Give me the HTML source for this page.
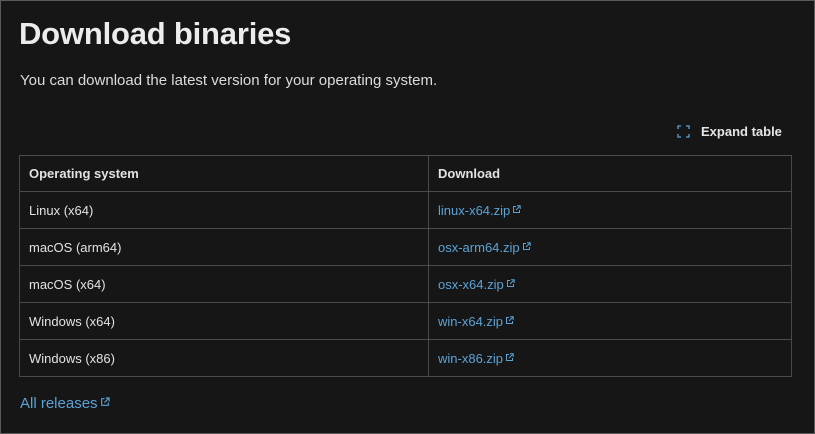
<!DOCTYPE html>
<html><head><style>
html,body{margin:0;padding:0}
body{width:815px;height:434px;background:#161616;font-family:"Liberation Sans",sans-serif;color:#e6e6e6;position:relative;overflow:hidden}
.frame{position:absolute;left:0;top:0;width:813px;height:432px;border:1px solid #5a5a5a}
h1{position:absolute;left:19px;top:16px;margin:0;font-size:31px;font-weight:600;color:#ececec;letter-spacing:-0.2px}
.sub{position:absolute;left:20px;top:72px;font-size:15px;color:#dcdcdc}
.exp{position:absolute;left:677px;top:124px;font-size:13px;font-weight:bold;color:#e6e6e6}
.exp svg{position:absolute;left:0;top:1px}
.exp span{margin-left:24px}
table{position:absolute;left:19px;top:155px;width:773px;border-collapse:collapse;font-size:13px}
td,th{border:1px solid #4a4a4a;height:36px;padding:0 0 0 9px;text-align:left;color:#e2e2e2;box-sizing:border-box}
th{font-weight:bold;height:36px}
td{height:37px}
td:first-child,th:first-child{width:409px}
a{color:#5aa3d6;text-decoration:none}
.ext{display:inline-block;margin-left:2px;vertical-align:1px}
.all{position:absolute;left:20px;top:395px;font-size:15px}
</style></head><body>
<div class="frame"></div>
<h1>Download binaries</h1>
<div class="sub">You can download the latest version for your operating system.</div>
<div class="exp"><svg width="13" height="13" viewBox="0 0 13 13" fill="none" stroke="#5aa3d6" stroke-width="1.3"><path d="M1 4V1H4M9 1H12V4M12 9V12H9M4 12H1V9"/></svg><span>Expand table</span></div>
<table>
<tr><th>Operating system</th><th>Download</th></tr>
<tr><td>Linux (x64)</td><td><a>linux-x64.zip<svg class="ext" width="9" height="9" viewBox="0 0 9 9" fill="none" stroke="#5aa3d6"><path d="M4 1.5H1.5V7.5H7.5V5M5 0.8H8.2V4M8.2 0.8L4 5"/></svg></a></td></tr>
<tr><td>macOS (arm64)</td><td><a>osx-arm64.zip<svg class="ext" width="9" height="9" viewBox="0 0 9 9" fill="none" stroke="#5aa3d6"><path d="M4 1.5H1.5V7.5H7.5V5M5 0.8H8.2V4M8.2 0.8L4 5"/></svg></a></td></tr>
<tr><td>macOS (x64)</td><td><a>osx-x64.zip<svg class="ext" width="9" height="9" viewBox="0 0 9 9" fill="none" stroke="#5aa3d6"><path d="M4 1.5H1.5V7.5H7.5V5M5 0.8H8.2V4M8.2 0.8L4 5"/></svg></a></td></tr>
<tr><td>Windows (x64)</td><td><a>win-x64.zip<svg class="ext" width="9" height="9" viewBox="0 0 9 9" fill="none" stroke="#5aa3d6"><path d="M4 1.5H1.5V7.5H7.5V5M5 0.8H8.2V4M8.2 0.8L4 5"/></svg></a></td></tr>
<tr><td>Windows (x86)</td><td><a>win-x86.zip<svg class="ext" width="9" height="9" viewBox="0 0 9 9" fill="none" stroke="#5aa3d6"><path d="M4 1.5H1.5V7.5H7.5V5M5 0.8H8.2V4M8.2 0.8L4 5"/></svg></a></td></tr>
</table>
<a class="all">All releases<svg class="ext" width="10" height="10" viewBox="0 0 9 9" fill="none" stroke="#5aa3d6"><path d="M4 1.5H1.5V7.5H7.5V5M5 0.8H8.2V4M8.2 0.8L4 5"/></svg></a>
</body></html>
